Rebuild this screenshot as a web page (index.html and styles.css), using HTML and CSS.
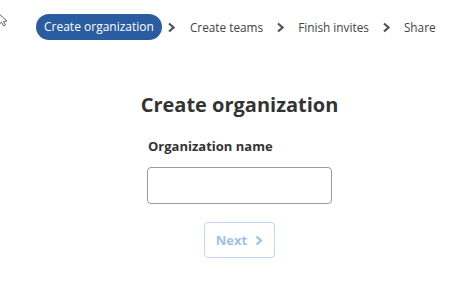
FILE: index.html
```html
<!DOCTYPE html>
<html lang="en">
<head>
    <meta charset="UTF-8">
    <meta name="viewport" content="width=device-width, initial-scale=1.0">
    <title>Create organization</title>
    <link rel="stylesheet" href="styles.css">
</head>
<body>
    <!-- Mouse pointer left over from the capture -->
    <svg class="cursor" width="12" height="14" viewBox="0 0 12 14">
        <path d="M-2 1 L7 9 L3.5 9.5 L5.5 13 L3.5 13.8 L1.5 10.2 L-1 12.5" fill="#fff" stroke="#666" stroke-width="1"/>
    </svg>

    <!-- Steps -->
    <nav class="steps">
        <span class="step active">Create organization</span>
        <svg class="chev first" width="7" height="11" viewBox="0 0 7 11"><polyline points="1,1.5 5.5,5.5 1,9.5" fill="none" stroke="#555" stroke-width="2.2"/></svg>
        <span class="step">Create teams</span>
        <svg class="chev" width="7" height="11" viewBox="0 0 7 11"><polyline points="1,1.5 5.5,5.5 1,9.5" fill="none" stroke="#555" stroke-width="2.2"/></svg>
        <span class="step">Finish invites</span>
        <svg class="chev" width="7" height="11" viewBox="0 0 7 11"><polyline points="1,1.5 5.5,5.5 1,9.5" fill="none" stroke="#555" stroke-width="2.2"/></svg>
        <span class="step">Share</span>
    </nav>

    <main class="form">
        <h1>Create organization</h1>
        <label class="field-label" for="org_name">Organization name</label>
        <input type="text" id="org_name" class="field-input">
        <button class="next-btn" disabled>
            Next
            <svg width="8" height="11" viewBox="0 0 8 11"><polyline points="1.5,1.5 6,5.5 1.5,9.5" fill="none" stroke="#9fc0e2" stroke-width="2.2"/></svg>
        </button>
    </main>
</body>
</html>
```

FILE: styles.css
```css
/* General Reset */
* {
    box-sizing: border-box;
    margin: 0;
    padding: 0;
}

body {
    font-family: "Open Sans", "Noto Sans", sans-serif;
    background: #fff;
    color: #333;
    width: 474px;
    height: 296px;
    overflow: hidden;
    position: relative;
}

.cursor {
    position: absolute;
    left: 0;
    top: 12px;
}

/* Steps */
.steps {
    display: flex;
    align-items: center;
    padding: 14px 0 0 36px;
    height: 40px;
}

.step {
    font-size: 11.8px;
    color: #444;
    margin-right: 14px;
}

.step.active {
    font-size: 12px;
    background-color: #2a5d9f;
    color: #fff;
    height: 26px;
    line-height: 26px;
    padding: 0 8px;
    border-radius: 13px;
    margin-right: 6px;
}

.chev {
    margin-right: 14px;
}

.chev.first {
    margin-right: 15px;
}

/* Form */
.form {
    width: 185px;
    margin: 52px 0 0 147px;
    display: flex;
    flex-direction: column;
}

.form h1 {
    font-size: 20px;
    font-weight: 700;
    color: #333;
    text-align: center;
    white-space: nowrap;
    margin: 0 -20px;
    line-height: 26px;
}

.field-label {
    font-size: 13px;
    font-weight: 700;
    margin-top: 19px;
    padding-left: 1px;
    line-height: 18px;
}

.field-input {
    height: 37px;
    margin-top: 12px;
    border: 1px solid #999;
    border-radius: 4px;
    font-size: 13px;
    padding: 0 8px;
}

.next-btn {
    align-self: center;
    width: 71px;
    height: 36px;
    margin-top: 18px;
    background: #fff;
    border: 1px solid #c3d7ee;
    border-radius: 4px;
    color: #9fc0e2;
    font-family: inherit;
    font-size: 13px;
    font-weight: 700;
    display: flex;
    align-items: center;
    justify-content: center;
    gap: 8px;
}
```
